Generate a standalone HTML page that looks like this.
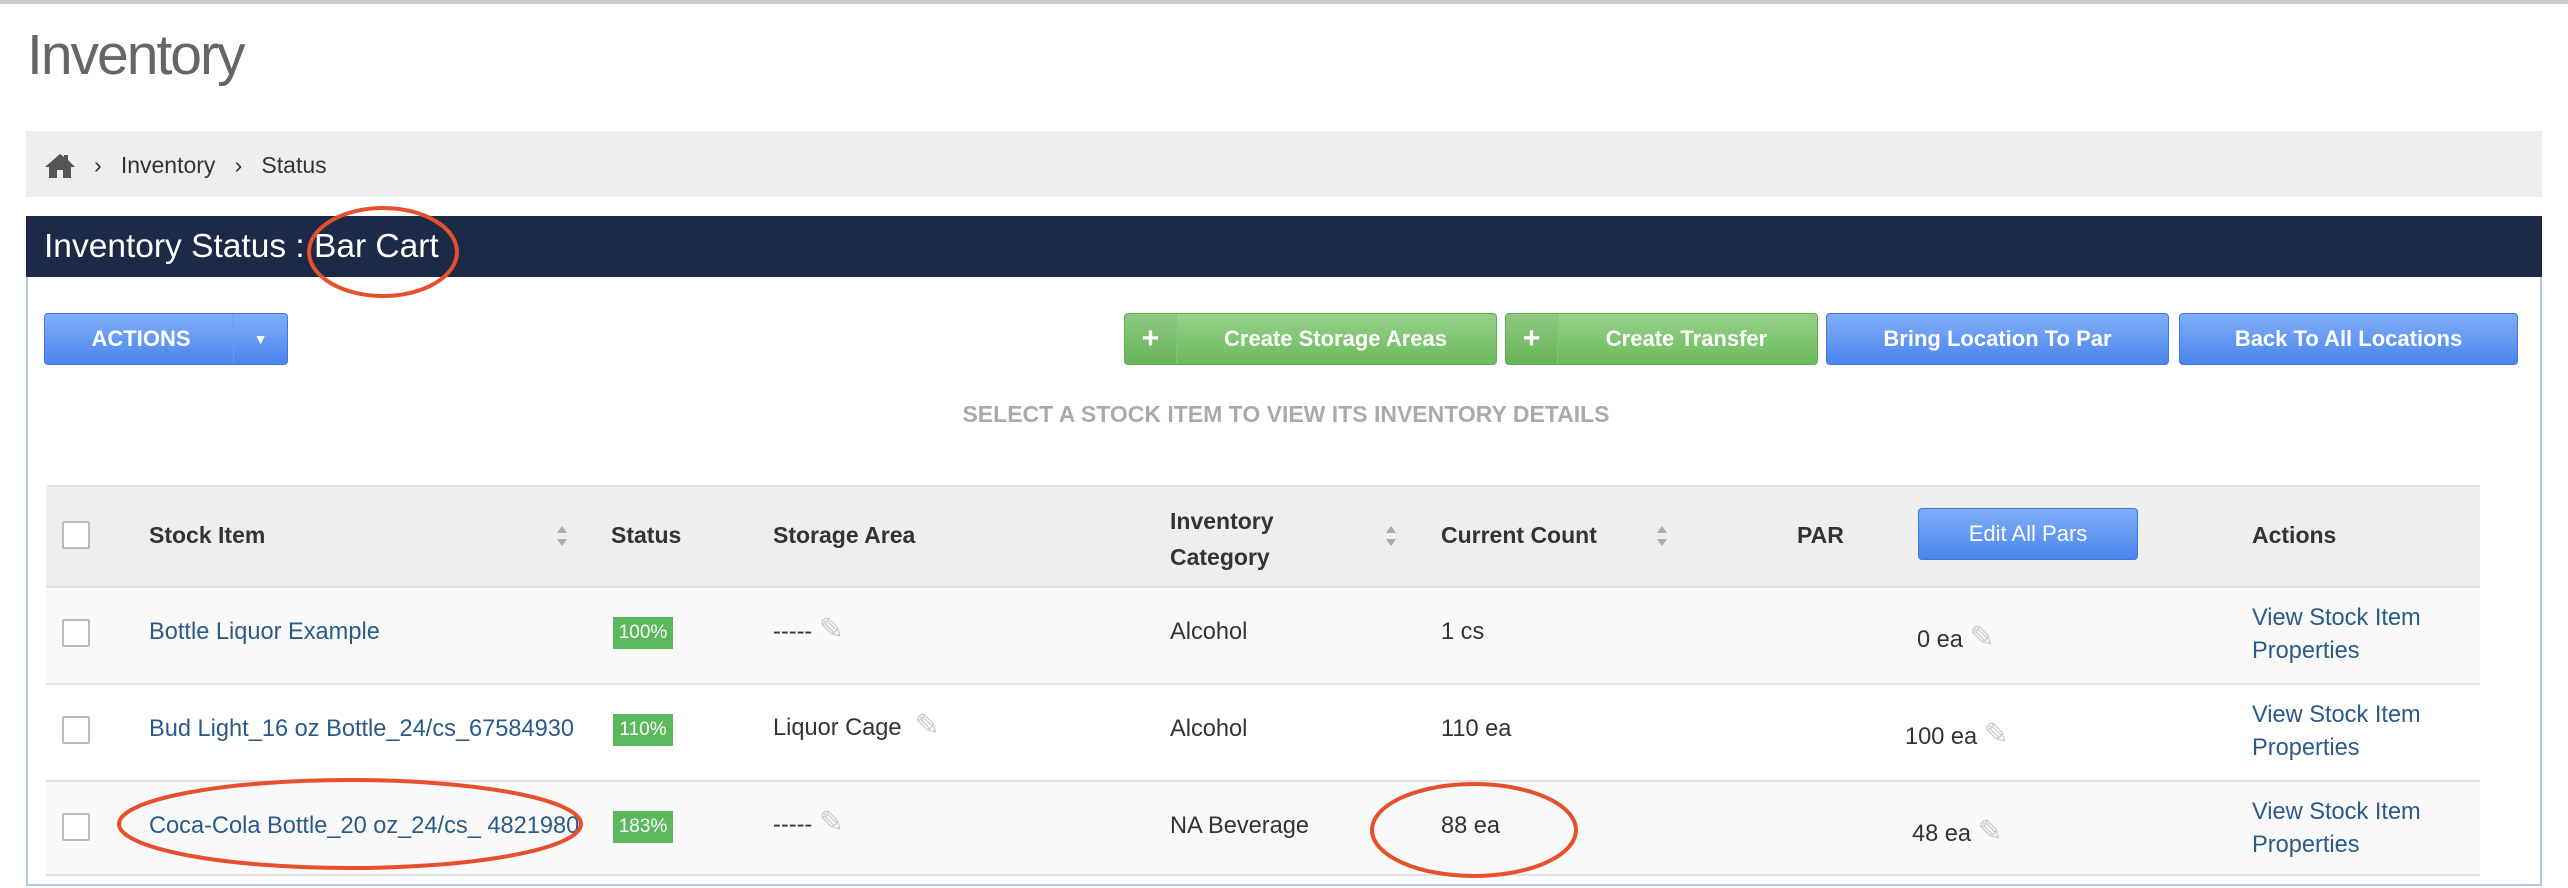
<!DOCTYPE html>
<html><head><meta charset="utf-8"><style>
*{margin:0;padding:0;box-sizing:border-box}
body{width:2568px;height:888px;background:#fff;font-family:"Liberation Sans",sans-serif;position:relative;overflow:hidden;color:#333}
.a{position:absolute;white-space:nowrap}
.btn{position:absolute;top:313px;height:52px;border-radius:4px;color:#fff;font-size:22px;font-weight:bold;display:flex;align-items:center;justify-content:center}
.blue{background:linear-gradient(#80aef7,#4a85ee);border:1px solid #3f78de}
.green{background:linear-gradient(#96d188,#6bbb5c);border:1px solid #5fae50}
.th{position:absolute;font-size:23px;font-weight:bold;color:#333}
.td{position:absolute;font-size:23.6px;color:#333}
.lk{color:#2a5a8a}
.cb{position:absolute;left:62px;width:28px;height:28px;border:2px solid #bbb;background:#fff;border-radius:2px}
.badge{position:absolute;left:613px;width:60px;height:32px;background:#5cb85c;color:#fff;font-size:19px;display:flex;align-items:center;justify-content:center}
.sort{position:absolute;width:14px;height:24px}
.pen{color:#c8c8c8;font-size:30px}
</style></head><body>
<div class="a" style="left:0;top:0;width:2568px;height:4px;background:#ccc"></div>
<div class="a" style="left:27px;top:22px;font-size:57px;color:#666;letter-spacing:-2px">Inventory</div>
<div class="a" style="left:26px;top:131px;width:2516px;height:66px;background:#eee"></div>
<svg class="a" style="left:44px;top:153px" width="32" height="26" viewBox="0 0 32 26"><path d="M16 1L1 14h4v11h8v-8h6v8h8V14h4L24 7V2h-4v2z" fill="#555"/></svg>
<div class="a" style="left:94px;top:152px;font-size:23px;color:#333">›&nbsp;&nbsp; Inventory &nbsp;&nbsp;›&nbsp;&nbsp; Status</div>
<div class="a" style="left:26px;top:216px;width:2516px;height:670px;border:2px solid #b8c8e0;border-top:none"></div>
<div class="a" style="left:26px;top:216px;width:2516px;height:61px;background:#1c2a48"></div>
<div class="a" style="left:44px;top:228px;font-size:33.5px;color:#fff">Inventory Status : Bar Cart</div>
<div class="btn blue" style="left:44px;width:244px"><span style="margin-right:50px">ACTIONS</span><span style="position:absolute;right:0;top:0;width:54px;height:100%;border-left:1px solid #6a9af0;display:flex;align-items:center;justify-content:center;font-size:14px">▼</span></div>
<div class="btn green" style="left:1124px;width:373px"><span style="position:absolute;left:0;top:0;width:52px;height:100%;display:flex;align-items:center;justify-content:center;font-size:30px;border-right:1px solid #85c676;background:rgba(0,0,0,.04)">+</span><span style="margin-left:50px">Create Storage Areas</span></div>
<div class="btn green" style="left:1505px;width:313px"><span style="position:absolute;left:0;top:0;width:52px;height:100%;display:flex;align-items:center;justify-content:center;font-size:30px;border-right:1px solid #85c676;background:rgba(0,0,0,.04)">+</span><span style="margin-left:50px">Create Transfer</span></div>
<div class="btn blue" style="left:1826px;width:343px">Bring Location To Par</div>
<div class="btn blue" style="left:2179px;width:339px">Back To All Locations</div>
<div class="a" style="left:0;width:2568px;top:401px;text-align:center;font-size:23px;font-weight:bold;color:#aaa;padding-left:4px">SELECT A STOCK ITEM TO VIEW ITS INVENTORY DETAILS</div>
<div class="a" style="left:46px;top:485px;width:2434px;height:101px;background:#eee;border-top:2px solid #e2e2e2"></div>
<div class="a" style="left:46px;top:586px;width:2434px;height:97px;background:#f9f9f9;border-top:2px solid #e2e2e2"></div>
<div class="a" style="left:46px;top:683px;width:2434px;height:97px;background:#fff;border-top:2px solid #e2e2e2"></div>
<div class="a" style="left:46px;top:780px;width:2434px;height:96px;background:#f9f9f9;border-top:2px solid #e2e2e2;border-bottom:2px solid #e2e2e2"></div>
<div class="cb" style="top:521px"></div>
<div class="th" style="left:149px;top:522px">Stock Item</div>
<div class="th" style="left:611px;top:522px">Status</div>
<div class="th" style="left:773px;top:522px">Storage Area</div>
<div class="th" style="left:1170px;top:503px;line-height:36px">Inventory<br>Category</div>
<div class="th" style="left:1441px;top:522px">Current Count</div>
<div class="th" style="left:1797px;top:522px">PAR</div>
<div class="btn blue" style="left:1918px;top:508px;height:52px;width:220px;font-weight:normal">Edit All Pars</div>
<div class="th" style="left:2252px;top:522px">Actions</div>
<svg class="sort" style="left:555px;top:524px" viewBox="0 0 14 24"><path d="M7 2L12 9H2zM7 22L12 15H2z" fill="#aaa"/></svg>
<svg class="sort" style="left:1384px;top:524px" viewBox="0 0 14 24"><path d="M7 2L12 9H2zM7 22L12 15H2z" fill="#aaa"/></svg>
<svg class="sort" style="left:1655px;top:524px" viewBox="0 0 14 24"><path d="M7 2L12 9H2zM7 22L12 15H2z" fill="#aaa"/></svg>

<div class="cb" style="top:619px"></div>
<div class="td lk" style="left:149px;top:619px">Bottle Liquor Example</div>
<div class="badge" style="top:617px">100%</div>
<div class="td" style="left:773px;top:612px">----- <span class="pen">✎</span></div>
<div class="td" style="left:1170px;top:619px">Alcohol</div>
<div class="td" style="left:1441px;top:619px">1 cs</div>
<div class="td" style="left:1917px;top:620px">0 ea <span class="pen">✎</span></div>
<div class="td lk" style="left:2252px;top:602px;line-height:33px">View Stock Item<br>Properties</div>

<div class="cb" style="top:716px"></div>
<div class="td lk" style="left:149px;top:716px">Bud Light_16 oz Bottle_24/cs_67584930</div>
<div class="badge" style="top:714px">110%</div>
<div class="td" style="left:773px;top:708px">Liquor Cage &nbsp;<span class="pen">✎</span></div>
<div class="td" style="left:1170px;top:716px">Alcohol</div>
<div class="td" style="left:1441px;top:716px">110 ea</div>
<div class="td" style="left:1905px;top:717px">100 ea <span class="pen">✎</span></div>
<div class="td lk" style="left:2252px;top:699px;line-height:33px">View Stock Item<br>Properties</div>

<div class="cb" style="top:813px"></div>
<div class="td lk" style="left:149px;top:813px">Coca-Cola Bottle_20 oz_24/cs_ 4821980</div>
<div class="badge" style="top:811px">183%</div>
<div class="td" style="left:773px;top:805px">----- <span class="pen">✎</span></div>
<div class="td" style="left:1170px;top:813px">NA Beverage</div>
<div class="td" style="left:1441px;top:813px">88 ea</div>
<div class="td" style="left:1912px;top:814px">48 ea <span class="pen">✎</span></div>
<div class="td lk" style="left:2252px;top:796px;line-height:33px">View Stock Item<br>Properties</div>

<svg class="a" style="left:0;top:0" width="2568" height="888"><g fill="none" stroke="#e8502d" stroke-width="4"><ellipse cx="383" cy="252" rx="74" ry="44"/><ellipse cx="350" cy="824" rx="231" ry="44"/><ellipse cx="1474" cy="830" rx="102" ry="46"/></g></svg>
</body></html>
